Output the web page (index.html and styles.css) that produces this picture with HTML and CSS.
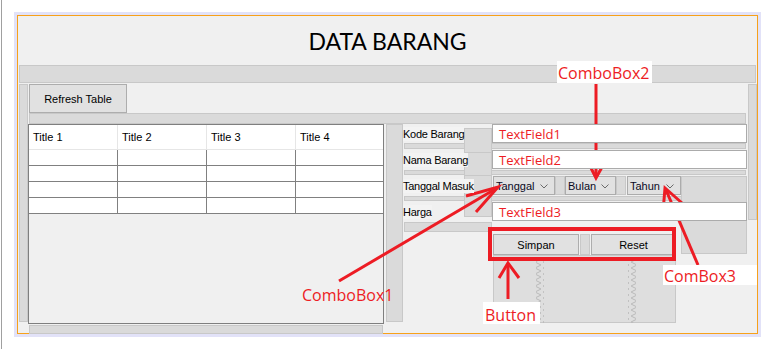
FILE: index.html
```html
<!DOCTYPE html>
<html lang="id">
<head>
<meta charset="utf-8">
<title>DATA BARANG</title>
<link rel="stylesheet" href="styles.css">
</head>
<body>
<div class="stage">
  <div class="frame">
    <div class="panel">
      <div class="title">DATA BARANG</div>
      <div class="bar bar-top"></div>
      <div class="body">
        <div class="strip strip-left"></div>
        <div class="main">
          <button class="btn btn-refresh">Refresh Table</button>
          <div class="bar bar-mid"></div>
          <div class="content">
            <div class="table">
              <div class="thead">
                <div class="th">Title 1</div>
                <div class="th">Title 2</div>
                <div class="th">Title 3</div>
                <div class="th">Title 4</div>
              </div>
              <div class="trow"><div class="td"></div><div class="td"></div><div class="td"></div><div class="td"></div></div>
              <div class="trow"><div class="td"></div><div class="td"></div><div class="td"></div><div class="td"></div></div>
              <div class="trow"><div class="td"></div><div class="td"></div><div class="td"></div><div class="td"></div></div>
              <div class="trow"><div class="td"></div><div class="td"></div><div class="td"></div><div class="td"></div></div>
            </div>
            <div class="strip strip-form"></div>
            <div class="form">
              <div class="fbar fbar-1"></div>
              <div class="fbar fbar-2"></div>
              <div class="fbar fbar-3"></div>
              <div class="fbar fbar-4"></div>
              <div class="gapcol">
                <div class="gc gc-1"></div>
                <div class="gc gc-2"></div>
                <div class="gc gc-3"></div>
                <div class="gc gc-4"></div>
              </div>
              <div class="rbox"></div>
              <div class="lbl lbl-1">Kode Barang</div>
              <div class="lbl lbl-2">Nama Barang</div>
              <div class="lbl lbl-3">Tanggal Masuk</div>
              <div class="lbl lbl-4">Harga</div>
              <div class="tf tf-1">TextField1</div>
              <div class="tf tf-2">TextField2</div>
              <div class="cb cb-1"><span>Tanggal</span><svg class="chev" width="8" height="5" viewBox="0 0 8 5"><polyline points="0.5,0.5 4,4 7.5,0.5"/></svg></div>
              <div class="gb gb-1"></div>
              <div class="cb cb-2"><span>Bulan</span><svg class="chev" width="8" height="5" viewBox="0 0 8 5"><polyline points="0.5,0.5 4,4 7.5,0.5"/></svg></div>
              <div class="gb gb-2"></div>
              <div class="cb cb-3"><span>Tahun</span><svg class="chev" width="8" height="5" viewBox="0 0 8 5"><polyline points="0.5,0.5 4,4 7.5,0.5"/></svg></div>
              <div class="tf tf-3">TextField3</div>
              <div class="actions">
                <div class="btnrow">
                  <button class="btn btn-simpan">Simpan</button>
                  <div class="gapbtn"></div>
                  <button class="btn btn-reset">Reset</button>
                </div>
                <div class="springs">
                  <svg width="181" height="67" viewBox="0 0 181 67">
                    <defs>
                      <pattern id="zig" width="8" height="6" patternUnits="userSpaceOnUse">
                        <path d="M1 0 L7 3 L1 6" fill="none" stroke="#b9b9b9" stroke-width="1"/>
                      </pattern>
                    </defs>
                    <rect x="42" y="1" width="8" height="66" fill="url(#zig)"/>
                    <rect x="134" y="1" width="8" height="66" fill="url(#zig)"/>
                  </svg>
                </div>
              </div>
            </div>
          </div>
          <div class="bar bar-bottom"></div>
        </div>
        <div class="strip strip-right"></div>
      </div>
    </div>
  </div>
</div>

<svg class="notes" width="776" height="349" viewBox="0 0 776 349">
  <g class="ink">
    <rect x="490" y="229" width="184" height="30" fill="none"/>
    <line x1="596" y1="84" x2="596" y2="177"/>
    <polyline points="586,158 596,178 607,158" fill="none"/>
    <line x1="339" y1="281" x2="497" y2="188"/>
    <polyline points="466,196 498,187 476,212" fill="none"/>
    <line x1="698" y1="265" x2="666" y2="190"/>
    <polyline points="663,212 665,188 682,203" fill="none"/>
    <line x1="508" y1="299" x2="508" y2="264"/>
    <polyline points="499,278 508,263 519,278" fill="none"/>
  </g>
  <rect x="557" y="61" width="95" height="22" fill="#fff"/>
  <rect x="663" y="265" width="94" height="20" fill="#fff"/>
  <rect x="483" y="302" width="57" height="22" fill="#fff"/>
  <text class="note" x="558" y="79">ComboBox2</text>
  <text class="note" x="302" y="301">ComboBox1</text>
  <text class="note" x="664" y="282">ComBox3</text>
  <text class="note" x="485" y="321">Button</text>
</svg>
</body>
</html>
```

FILE: styles.css
```css
* {
  box-sizing: border-box;
}

html,
body {
  margin: 0;
}

body {
  position: relative;
  width: 776px;
  height: 349px;
  overflow: hidden;
  background: #ffffff;
  font-family: "Liberation Sans", Arial, sans-serif;
  font-size: 11px;
  color: #000000;
}

.stage {
  height: 349px;
  margin-left: 1px;
  border-left: 1px solid #a0a0a0;
  padding: 12px 0 0 12px;
}

.frame {
  width: 747px;
  border: 3px solid #e2e2f8;
}

.panel {
  height: 319px;
  border: 1px solid #f7a11a;
  background: #f0f0f0;
}

.title {
  height: 49px;
  padding-top: 11px;
  text-align: center;
  font-family: Lato, "Liberation Sans", sans-serif;
  font-size: 23px;
  line-height: 28px;
  color: #000000;
}

.bar,
.strip,
.fbar,
.gc,
.gb,
.rbox,
.gapbtn {
  background: #dadada;
  border: 1px solid #c8c8c8;
}

.bar-top {
  height: 18px;
  margin: 0 1px 1px 1px;
}

.body {
  display: flex;
  align-items: flex-start;
}

.strip-left {
  width: 9px;
  height: 238px;
  margin-left: 1px;
}

.main {
  width: 720px;
}

.strip-right {
  width: 9px;
  height: 136px;
}

.btn {
  font-family: inherit;
  font-size: 11px;
  color: #000000;
  background: #e1e1e1;
  border: 1px solid #adadad;
  padding: 0;
  margin: 0;
  text-align: center;
}

.btn-refresh {
  display: block;
  width: 98px;
  height: 29px;
  margin-left: 1px;
}

.bar-mid {
  width: 717px;
  height: 11px;
  margin-left: 1px;
}

.content {
  display: flex;
  align-items: flex-start;
  height: 200px;
}

.table {
  width: 356px;
  height: 200px;
  border: 1px solid #7f7f7f;
  background: #f0f0f0;
}

.thead,
.trow {
  display: grid;
  grid-template-columns: 89px 89px 89px 87px;
  background: #ffffff;
}

.thead {
  height: 25px;
  border-bottom: 1px solid #e6e6e6;
}

.th {
  display: flex;
  align-items: center;
  padding-left: 4px;
  border-right: 1px solid #e6e6e6;
}

.trow {
  height: 16px;
  border-bottom: 1px solid #808080;
}

.td {
  border-right: 1px solid #808080;
}

.th:last-child,
.td:last-child {
  border-right: 0;
}

.strip-form {
  width: 17px;
  height: 198px;
  margin-left: 2px;
}

.form {
  display: grid;
  width: 345px;
  grid-template-columns: 61px 28px 1px 62px 10px 51px 10px 55px 66px 1px;
  grid-template-rows: 19px 7px 19px 7px 19px 7px 19px 13px 21px 68px;
}

.fbar {
  grid-column: 1 / 10;
  margin: 0 1px 1px 1px;
}

.fbar-1 { grid-row: 2; }
.fbar-2 { grid-row: 4; margin-top: 1px; }
.fbar-3 { grid-row: 6; margin-top: 1px; }
.fbar-4 {
  grid-row: 8;
  grid-column: 1 / 3;
  margin: 1px 0 2px 1px;
}

.gapcol {
  grid-column: 2;
  grid-row: 1 / 8;
  align-self: start;
  margin-top: 4px;
  height: 89px;
  display: flex;
  flex-direction: column;
}

.gc-1 { height: 25px; }
.gc-2 { height: 23px; border-top: 0; }
.gc-3 { height: 21px; border-top: 0; }
.gc-4 { height: 20px; border-top: 0; }

.rbox {
  grid-column: 9;
  grid-row: 5 / 10;
  margin-bottom: 1px;
}

.lbl {
  position: relative;
  z-index: 2;
  grid-column: 1 / 3;
  justify-self: start;
  align-self: center;
  white-space: nowrap;
  letter-spacing: -0.25px;
  background: #f3f3f3;
  line-height: 14px;
}

.lbl-1 { grid-row: 1; }
.lbl-2 { grid-row: 3; }
.lbl-3 { grid-row: 5; }
.lbl-4 { grid-row: 7; }

.tf {
  position: relative;
  z-index: 1;
  grid-column: 3 / 10;
  display: flex;
  align-items: center;
  padding-left: 6px;
  background: #ffffff;
  border: 1px solid #ababab;
  color: #ed1c24;
  font-family: "Open Sans", "Noto Sans", sans-serif;
  font-size: 13px;
}

.tf-1 { grid-row: 1; }
.tf-2 { grid-row: 3; }
.tf-3 { grid-row: 7; }

.cb {
  grid-row: 5;
  display: flex;
  align-items: center;
  justify-content: space-between;
  padding: 0 6px 0 2px;
  background: #e1e1e1;
  border: 1px solid #acacac;
  color: #0a0a1e;
}

.cb-1 { grid-column: 4; }
.cb-2 { grid-column: 6; }
.cb-3 { grid-column: 8; margin-left: 1px; }

.chev {
  display: block;
  margin-top: 2px;
}

.chev polyline {
  fill: none;
  stroke: #6a6a6a;
  stroke-width: 1;
}

.gb { grid-row: 5; }
.gb-1 { grid-column: 5; }
.gb-2 { grid-column: 7; }

.actions {
  grid-column: 4 / 9;
  grid-row: 9 / 11;
  width: 183px;
  display: flex;
  flex-direction: column;
}

.btnrow {
  display: flex;
  height: 21px;
}

.btn-simpan {
  width: 86px;
  height: 21px;
}

.gapbtn {
  width: 10px;
  height: 21px;
  margin: 0 1px;
}

.btn-reset {
  width: 85px;
  height: 21px;
}

.springs {
  height: 68px;
  background: #dedede;
  border: 1px solid #c8c8c8;
}

.springs svg {
  display: block;
}

.bar-bottom {
  width: 354px;
  height: 9px;
  margin: 1px 0 0 1px;
}

.notes {
  position: absolute;
  left: 0;
  top: 0;
  pointer-events: none;
}

.ink line,
.ink polyline,
.ink rect {
  stroke: #ed1c24;
  stroke-width: 3;
}

.ink rect {
  stroke-width: 4;
}

.note {
  font-family: "Open Sans", "Noto Sans", sans-serif;
  font-size: 16px;
  fill: #ed1c24;
}
```
